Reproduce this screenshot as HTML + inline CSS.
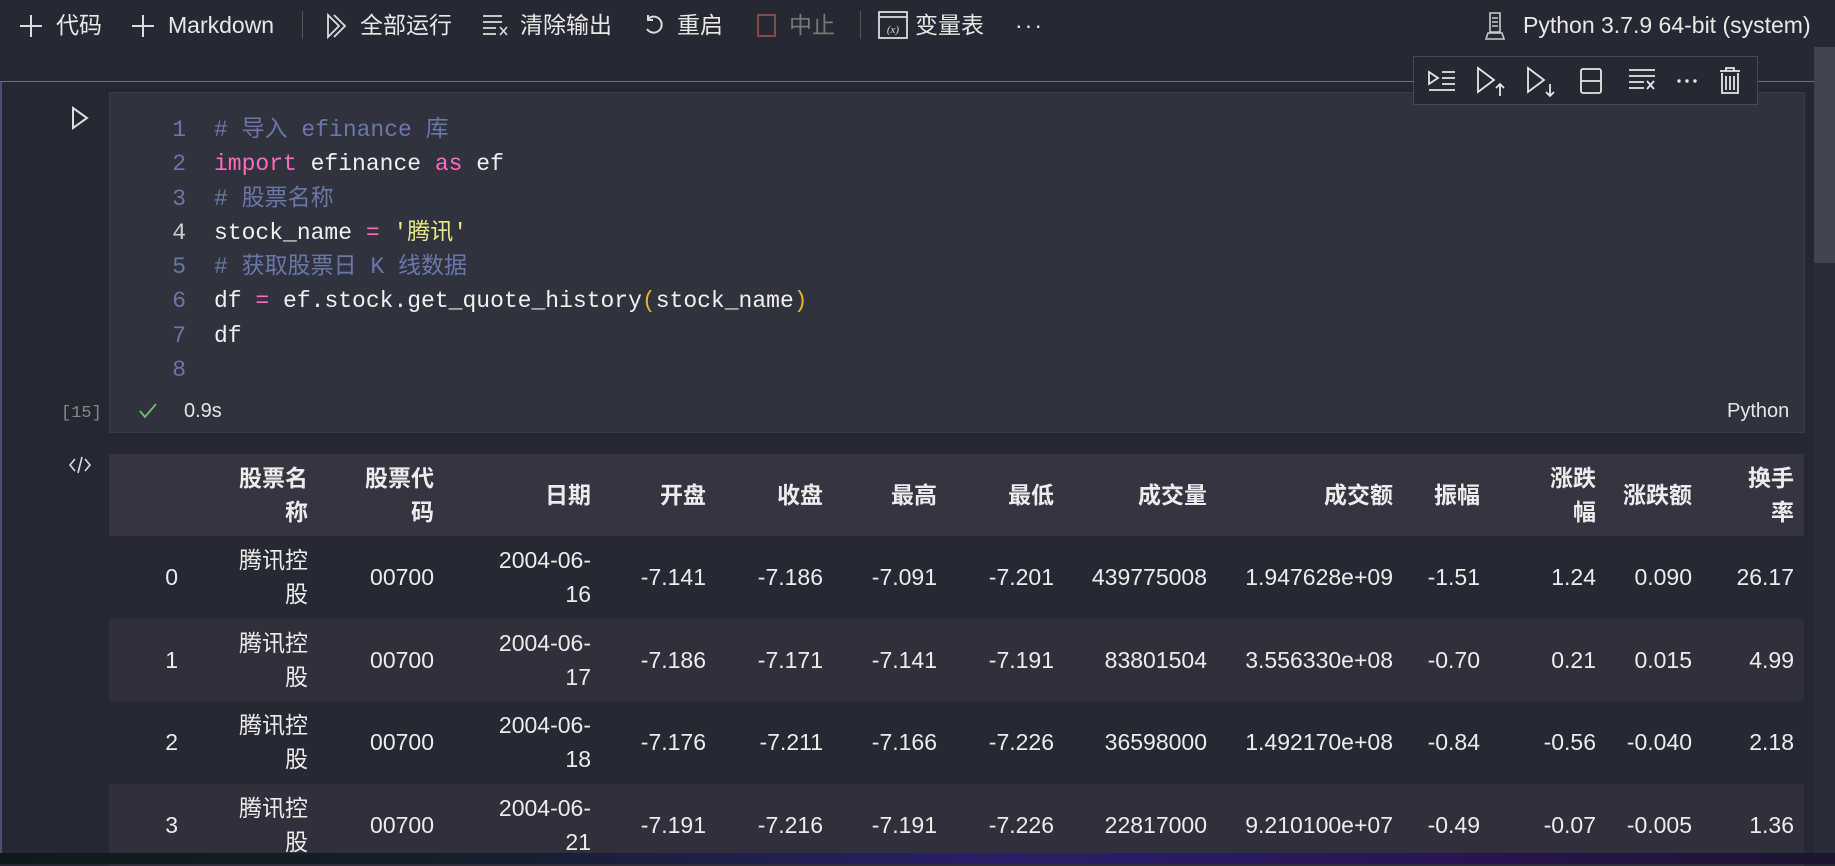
<!DOCTYPE html>
<html><head><meta charset="utf-8"><style>
*{margin:0;padding:0;box-sizing:border-box}
body{width:1835px;height:864px;overflow:hidden;background:#262834;color:#e6e6e6;font-family:"Liberation Sans","Noto Sans CJK SC",sans-serif;position:relative}
.a{position:absolute;white-space:nowrap}
.tb{font-size:23px;top:10px;line-height:30px;color:#e8e8e8}
.mono{font-family:"Liberation Mono","Noto Sans CJK SC",monospace;font-size:23px}
.ln{position:absolute;left:150px;width:36px;text-align:right;color:#6a78a8;white-space:nowrap;height:30px;line-height:30px;overflow:visible}
.cl{position:absolute;left:214px;color:#f0f0f0;white-space:pre;height:30px;line-height:30px}
.cm{color:#6a78a8}.kw{color:#ff6ac0}.st{color:#e8e88a}.pa{color:#e6b422}
table{position:absolute;left:109px;top:454px;border-collapse:collapse;font-size:23px;table-layout:fixed}
td,th{text-align:right;padding:0 10px 0 0;line-height:34px;color:#ececec}
th{height:82px;background:#343541;font-weight:bold}
td{height:82.5px}
tr.e td{background:#2f303c}
tr.o td{background:#262834}
</style></head><body>
<!-- toolbar -->
<svg class="a" style="left:18px;top:13px" width="26" height="26" viewBox="0 0 26 26"><path d="M13 2V24M2 13H24" stroke="#ddd" stroke-width="2"/></svg>
<div class="a tb" style="left:56px">代码</div>
<svg class="a" style="left:130px;top:13px" width="26" height="26" viewBox="0 0 26 26"><path d="M13 2V24M2 13H24" stroke="#ddd" stroke-width="2"/></svg>
<div class="a tb" style="left:168px">Markdown</div>
<div class="a" style="left:302px;top:11px;width:1px;height:28px;background:#555"></div>
<svg class="a" style="left:325px;top:12px" width="28" height="28" viewBox="0 0 28 28"><path d="M3 3L14 14L3 25ZM9 3L20 14L9 25" fill="none" stroke="#ddd" stroke-width="1.8"/></svg>
<div class="a tb" style="left:360px">全部运行</div>
<svg class="a" style="left:482px;top:13px" width="30" height="24" viewBox="0 0 30 24"><path d="M1 3H20M1 9H20M1 15H14M1 21H14" stroke="#ddd" stroke-width="1.8"/><path d="M18 14L25 22M25 14L18 22" stroke="#ddd" stroke-width="1.6"/></svg>
<div class="a tb" style="left:520px">清除输出</div>
<svg class="a" style="left:642px;top:13px" width="24" height="24" viewBox="0 0 24 24"><path d="M6 6A8 8 0 1 1 5 16M6 2V7H11" fill="none" stroke="#ddd" stroke-width="2"/></svg>
<div class="a tb" style="left:677px">重启</div>
<div class="a" style="left:757px;top:14px;width:19px;height:23px;border:2px solid #8a4a44"></div>
<div class="a tb" style="left:789px;color:#777">中止</div>
<div class="a" style="left:860px;top:11px;width:1px;height:28px;background:#555"></div>
<svg class="a" style="left:878px;top:11px" width="30" height="28" viewBox="0 0 30 28"><rect x="1" y="1" width="28" height="26" fill="none" stroke="#ddd" stroke-width="1.8"/><path d="M1 6H29" stroke="#ddd" stroke-width="1.8"/><text x="15" y="22" font-size="11" font-style="italic" fill="#ddd" text-anchor="middle" font-family="Liberation Serif">(x)</text></svg>
<div class="a tb" style="left:915px">变量表</div>
<div class="a tb" style="left:1015px;letter-spacing:2px">···</div>
<svg class="a" style="left:1482px;top:12px" width="26" height="28" viewBox="0 0 26 28"><path d="M8 1H18V20H8ZM10 6H16M10 10H16M10 14H16M4 27L6 21H20L22 27Z" fill="none" stroke="#ccc" stroke-width="1.6"/></svg>
<div class="a tb" style="left:1523px;font-size:23px">Python 3.7.9 64-bit (system)</div>
<!-- notebook area -->
<div class="a" style="left:0;top:81px;width:1814px;height:772px;border-top:1px solid #6b7090;border-left:2px solid #4a4f6e;background:#252733"></div>
<div class="a" style="left:1814px;top:47px;width:21px;height:806px;background:#2a2c38"></div>
<div class="a" style="left:1814px;top:47px;width:21px;height:216px;background:#41434f"></div>
<!-- code cell -->
<svg class="a" style="left:70px;top:106px" width="20" height="24" viewBox="0 0 20 24"><path d="M3 2L17 12L3 22Z" fill="none" stroke="#ddd" stroke-width="2"/></svg>
<div class="a" style="left:109px;top:92px;width:1696px;height:341px;background:#30323e;border:1px solid #3a3c48"></div>
<div class="mono" style="position:absolute;top:0;left:0">
<div class="ln" style="top:115px">1</div><div class="cl" style="top:115px"><span class="cm"># 导入 efinance 库</span></div>
<div class="ln" style="top:149px">2</div><div class="cl" style="top:149px"><span class="kw">import</span> efinance <span class="kw">as</span> ef</div>
<div class="ln" style="top:184px">3</div><div class="cl" style="top:184px"><span class="cm"># 股票名称</span></div>
<div class="ln" style="top:218px;color:#cfcfcf">4</div><div class="cl" style="top:218px">stock_name <span class="kw">=</span> <span class="st">'腾讯'</span></div>
<div class="ln" style="top:252px">5</div><div class="cl" style="top:252px"><span class="cm"># 获取股票日 K 线数据</span></div>
<div class="ln" style="top:286px">6</div><div class="cl" style="top:286px">df <span class="kw">=</span> ef.stock.get_quote_history<span class="pa">(</span>stock_name<span class="pa">)</span></div>
<div class="ln" style="top:321px">7</div><div class="cl" style="top:321px">df</div>
<div class="ln" style="top:355px">8</div>
</div>
<div class="a" style="left:61px;top:404px;font-size:17px;color:#888;font-family:'Liberation Mono',monospace">[15]</div>
<svg class="a" style="left:138px;top:402px" width="20" height="18" viewBox="0 0 20 18"><path d="M2 9L7 15L18 2" fill="none" stroke="#6cc070" stroke-width="1.8"/></svg>
<div class="a" style="left:184px;top:400px;font-size:20px">0.9s</div>
<div class="a" style="left:1727px;top:400px;font-size:20px">Python</div>
<!-- floating toolbar -->
<div class="a" style="left:1413px;top:56px;width:345px;height:49px;background:#262834;border:1px solid #454857"></div>
<svg class="a" style="left:1424px;top:66px" width="330" height="32" viewBox="0 0 330 32">
<g fill="none" stroke="#e6e6e6" stroke-width="1.8">
<path d="M5 6L14 12L5 18Z M18 6H31M18 12H31M18 18H31M5 24H31"/>
<path d="M54 2L70 14L54 26Z M76 30V18M72 22L76 18L80 22"/>
<path d="M104 2L120 14L104 26Z M126 18V30M122 26L126 30L130 26"/>
<rect x="157" y="3" width="20" height="24" rx="2"/><path d="M157 15H177"/>
<path d="M205 4H231M205 10H231M205 16H220M205 22H220M223 15L230 23M230 15L223 23"/>
<path d="M296 5H316M302 5V2H310V5M298 7V27H314V7M302 10V24M306 10V24M310 10V24"/>
</g>
<g fill="#e6e6e6"><circle cx="255" cy="15" r="1.7"/><circle cx="263" cy="15" r="1.7"/><circle cx="271" cy="15" r="1.7"/></g>
</svg>
<!-- output -->
<svg class="a" style="left:68px;top:455px" width="24" height="20" viewBox="0 0 24 20"><path d="M7 4L2 10L7 16M17 4L22 10L17 16M14 2L10 18" fill="none" stroke="#ddd" stroke-width="1.6"/></svg>
<table>
<colgroup><col style="width:79px"><col style="width:130px"><col style="width:126px"><col style="width:157px"><col style="width:115px"><col style="width:117px"><col style="width:114px"><col style="width:117px"><col style="width:153px"><col style="width:186px"><col style="width:87px"><col style="width:116px"><col style="width:96px"><col style="width:102px"></colgroup>
<tr><th></th><th>股票名<br>称</th><th>股票代<br>码</th><th>日期</th><th>开盘</th><th>收盘</th><th>最高</th><th>最低</th><th>成交量</th><th>成交额</th><th>振幅</th><th>涨跌<br>幅</th><th>涨跌额</th><th>换手<br>率</th></tr>
<tr class="o"><td>0</td><td>腾讯控<br>股</td><td>00700</td><td>2004-06-<br>16</td><td>-7.141</td><td>-7.186</td><td>-7.091</td><td>-7.201</td><td>439775008</td><td>1.947628e+09</td><td>-1.51</td><td>1.24</td><td>0.090</td><td>26.17</td></tr>
<tr class="e"><td>1</td><td>腾讯控<br>股</td><td>00700</td><td>2004-06-<br>17</td><td>-7.186</td><td>-7.171</td><td>-7.141</td><td>-7.191</td><td>83801504</td><td>3.556330e+08</td><td>-0.70</td><td>0.21</td><td>0.015</td><td>4.99</td></tr>
<tr class="o"><td>2</td><td>腾讯控<br>股</td><td>00700</td><td>2004-06-<br>18</td><td>-7.176</td><td>-7.211</td><td>-7.166</td><td>-7.226</td><td>36598000</td><td>1.492170e+08</td><td>-0.84</td><td>-0.56</td><td>-0.040</td><td>2.18</td></tr>
<tr class="e"><td>3</td><td>腾讯控<br>股</td><td>00700</td><td>2004-06-<br>21</td><td>-7.191</td><td>-7.216</td><td>-7.191</td><td>-7.226</td><td>22817000</td><td>9.210100e+07</td><td>-0.49</td><td>-0.07</td><td>-0.005</td><td>1.36</td></tr>
</table>
<div class="a" style="left:0;top:853px;width:1835px;height:11px;background:linear-gradient(90deg,#0f1a1a 0%,#14202a 25%,#2a1f6a 55%,#2a1450 80%,#1e1430 100%)"></div>
</body></html>
